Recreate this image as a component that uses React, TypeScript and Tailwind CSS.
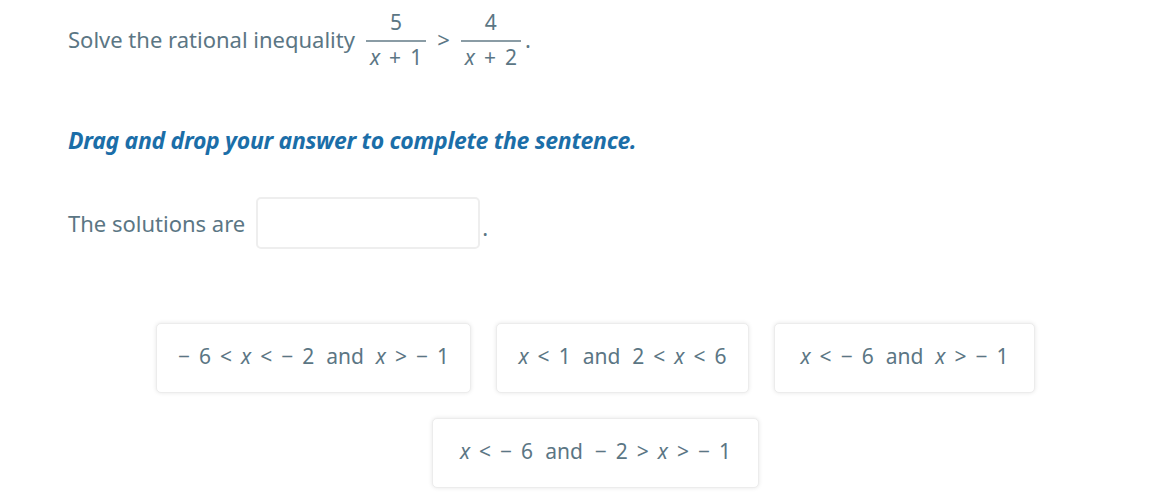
import React from "react";

const font = { fontFamily: '"Noto Sans", "Open Sans", sans-serif' };

// math-ish run: each token spaced out like typeset math
function M({ t, className = "" }: { t: string; className?: string }) {
  return (
    <span className={`inline-flex items-baseline gap-[9px] ${className}`}>
      {t.split(" ").map((tok, i) =>
        tok === "x" ? (
          <i key={i} className="italic">x</i>
        ) : tok === "and" ? (
          <span key={i} className="mx-[3px]">and</span>
        ) : (
          <span key={i}>{tok}</span>
        )
      )}
    </span>
  );
}

function Frac({ num, den }: { num: string; den: string }) {
  return (
    <span className="inline-flex flex-col items-center mx-[11px] text-[21px]">
      <span className="leading-[26px] mb-[5px]">{num}</span>
      <span className="h-[2px] w-full bg-[#8a9ca5]" />
      <span className="leading-[26px] mt-[2px] px-[4px]">
        <M t={den} className="gap-[8px]" />
      </span>
    </span>
  );
}

function Tile({ children, className = "" }: { children: React.ReactNode; className?: string }) {
  return (
    <div
      className={`h-[70px] flex items-center justify-center rounded-[5px] bg-white border border-[#ececec] shadow-[0_0_4px_rgba(0,0,0,0.10)] text-[21px] text-[#5b7684] ${className}`}
    >
      <span className="-mt-[3px]">{children}</span>
    </div>
  );
}

export default function App() {
  return (
    <div className="w-[1166px] h-[502px] bg-white text-[#5b7684]" style={font}>
      <div className="pl-[68px] pr-[43px]">
        <div className="pt-[9px] flex items-center text-[22px]">
          <span>Solve the rational inequality</span>
          <Frac num="5" den="x + 1" />
          <span>&gt;</span>
          <Frac num="4" den="x + 2" />
          <span className="-ml-[7px]">.</span>
        </div>

        <p className="mt-[55px] text-[23px] leading-[30px] font-bold italic text-[#1b6ea8] tracking-[-0.3px]">
          Drag and drop your answer to complete the sentence.
        </p>

        <div className="mt-[42px] flex items-center text-[22px]">
          <span>The solutions are</span>
          <div className="ml-[11px] w-[224px] h-[52px] rounded-[5px] border-2 border-[#eeeeee] bg-white" />
          <span className="ml-[2px] mt-[8px]">.</span>
        </div>

        <div className="mt-[74px] flex flex-col items-center gap-[25px]">
          <div className="flex gap-[25px]">
            <Tile className="w-[315px]">
              <M t="− 6 < x < − 2 and x > − 1" />
            </Tile>
            <Tile className="w-[253px]">
              <M t="x < 1 and 2 < x < 6" />
            </Tile>
            <Tile className="w-[261px]">
              <M t="x < − 6 and x > − 1" />
            </Tile>
          </div>
          <div className="flex">
            <Tile className="w-[327px]">
              <M t="x < − 6 and − 2 > x > − 1" />
            </Tile>
          </div>
        </div>
      </div>
    </div>
  );
}
